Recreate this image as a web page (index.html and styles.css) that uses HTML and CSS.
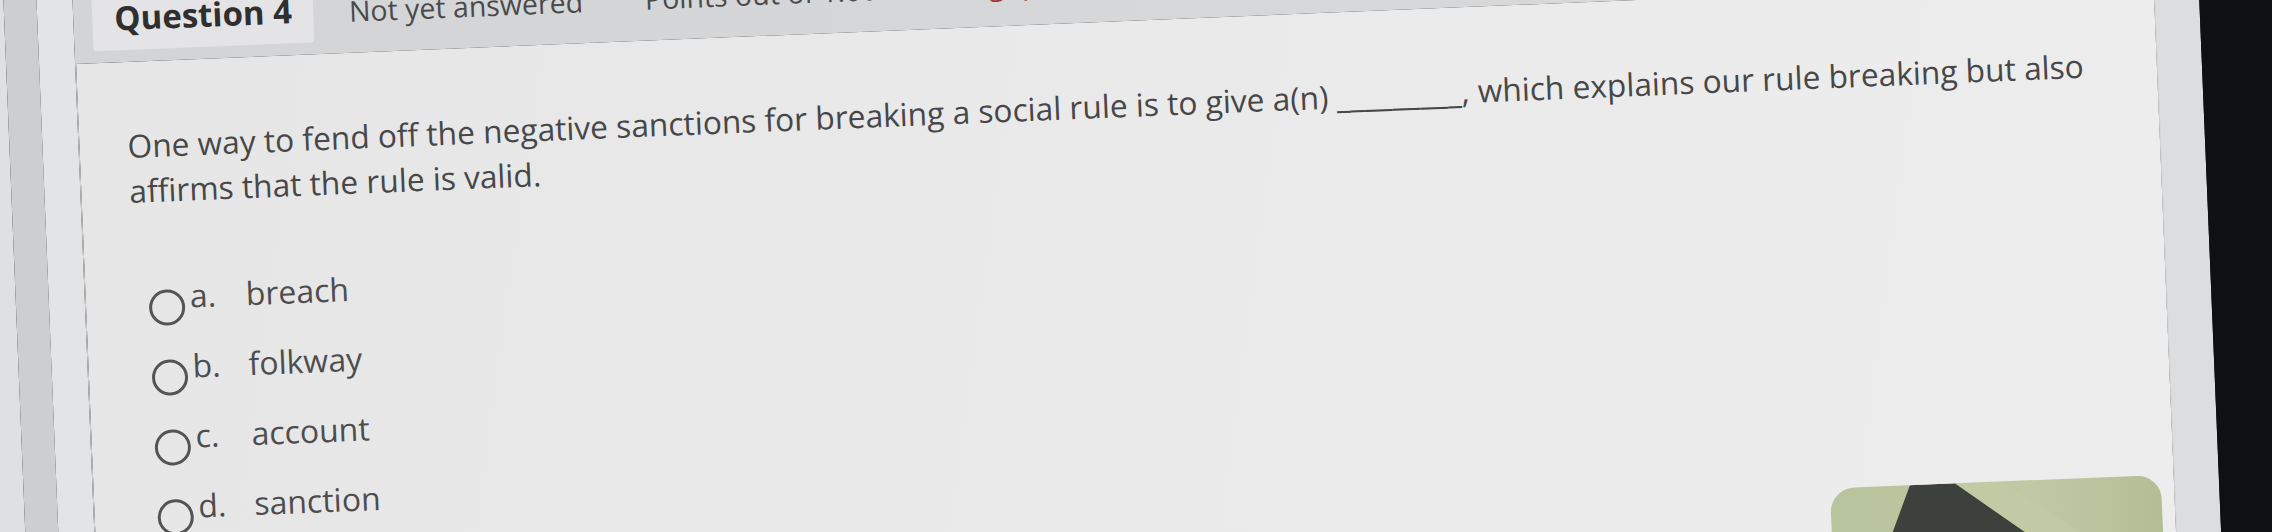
FILE: index.html
```html
<!DOCTYPE html>
<html lang="en">
<head>
<meta charset="utf-8">
<title>Question 4</title>
<link rel="stylesheet" href="styles.css">
</head>
<body>
<div class="screen">
  <div class="strip s1"></div>
  <div class="strip s2"></div>
  <div class="strip s3"></div>
  <div class="main">
    <div class="info">
      <div class="tab"><span class="qno">Question 4</span></div>
      <div class="state">Not yet answered</div>
      <div class="grade">Points out of 1.00</div>
      <div class="flag">&#9873; Flag question</div>
    </div>
    <div class="card">
      <div class="qtext">One way to fend off the negative sanctions for breaking a social rule is to give a(n) _________, which explains our rule breaking but also affirms that the rule is valid.</div>
      <div class="answers">
        <div class="opt"><span class="radio"></span><span class="lbl">a.</span><span class="ans">breach</span></div>
        <div class="opt"><span class="radio"></span><span class="lbl">b.</span><span class="ans">folkway</span></div>
        <div class="opt"><span class="radio"></span><span class="lbl">c.</span><span class="ans">account</span></div>
        <div class="opt"><span class="radio"></span><span class="lbl">d.</span><span class="ans">sanction</span></div>
      </div>
    </div>
  </div>
  <div class="strip s4"></div>
  <div class="bezel"></div>
  <div class="thumb">
    <svg width="331" height="140" viewBox="0 0 331 140">
      <polygon points="80,0 125,0 310,140 22,140" fill="#3c413d"/>
      <polygon points="125,0 170,0 331,110 331,140 310,140" fill="#c4cca6" opacity="0.6"/>
    </svg>
  </div>
</div>
</body>
</html>
```

FILE: styles.css
```css
html, body {
  margin: 0;
  padding: 0;
  overflow: hidden;
  background: #111213;
  width: 2272px;
  height: 532px;
}

.screen {
  position: relative;
  display: flex;
  width: 2420px;
  height: 800px;
  margin: -80px 0 0 -40px;
  transform: rotate(-2.35deg);
  transform-origin: 168px 238px;
  font-family: "Open Sans", "Liberation Sans", sans-serif;
  color: #4e4e4f;
}

.strip { flex: none; height: 100%; }
.s1 { width: 50px; background: #dfe0e2; }
.s2 { width: 33px; background: #cdced1; }
.s3 { width: 36px; background: #e3e4e6; }
.s4 { width: 45px; background: #dcdddf; border-left: 1px solid #d2d3d5; box-sizing: border-box; }
.bezel { flex: 1; background: #0e1011; }

.main {
  flex: none;
  width: 2080px;
  display: flex;
  flex-direction: column;
}

.info {
  height: 142px;
  box-sizing: border-box;
  padding-bottom: 12px;
  display: flex;
  align-items: flex-end;
  background: linear-gradient(90deg, #d3d4d6, #d9dadc);
}

.tab {
  margin-left: 19px;
  padding: 40px 21px 17px 22px;
  background: #e4e4e6;
  border-radius: 0 0 3px 3px;
}

.qno {
  display: block;
  font-size: 33px;
  line-height: 31px;
  font-weight: 700;
  color: #2f2f30;
}

.state, .grade, .flag {
  font-size: 28.5px;
  line-height: 28px;
  margin-bottom: 16px;
  color: #4a4a4b;
}
.state { margin-left: 36px; }
.grade { margin-left: 62px; }
.flag { margin-left: 40px; color: #a33a3a; }

.card {
  flex: 1;
  background: linear-gradient(100deg, #e6e6e7 0%, #eaeaeb 50%, #ededed 100%);
  border-left: 1px solid #d6d7d9;
  padding: 61px 0 0 48px;
}

.qtext {
  width: 2010px;
  font-size: 31.7px;
  font-weight: 500;
  line-height: 45px;
  color: #474748;
}

.answers {
  margin-top: 64px;
  display: flex;
  flex-direction: column;
  gap: 28px;
}

.opt {
  display: flex;
  align-items: flex-start;
  height: 42px;
  font-size: 32px;
  font-weight: 500;
  line-height: 42px;
  color: #4d4d4e;
}

.radio {
  flex: none;
  width: 36px;
  height: 36px;
  box-sizing: border-box;
  margin: 14px 0 0 15px;
  border: 3px solid #545455;
  border-radius: 50%;
}

.lbl {
  width: 56px;
  margin-left: 5px;
}

.thumb {
  position: absolute;
  left: 1855px;
  top: 638px;
  width: 331px;
  height: 140px;
  border-radius: 24px;
  overflow: hidden;
  background: linear-gradient(90deg, #b7c39c, #c0c9a3 60%, #b3be96);
}

.thumb svg { display: block; }
```
